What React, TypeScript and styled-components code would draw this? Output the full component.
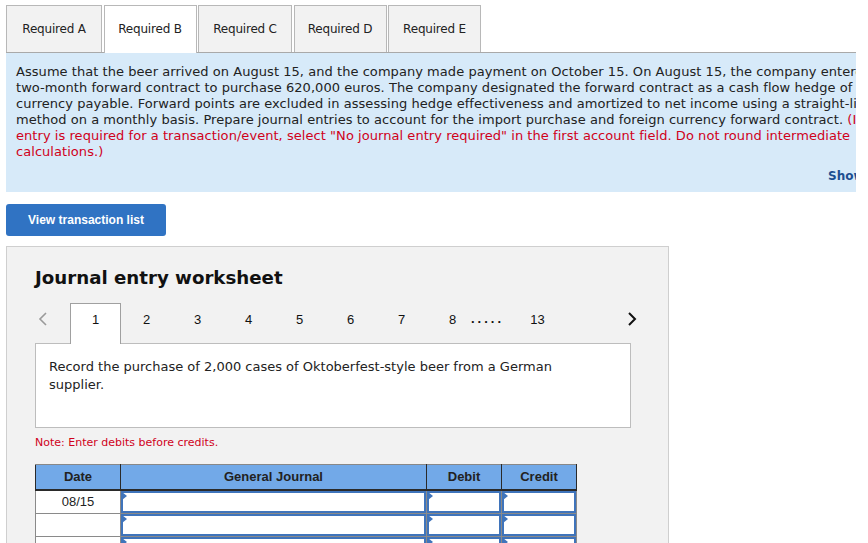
import styled, { createGlobalStyle } from "styled-components";

const GlobalStyle = createGlobalStyle`
  html, body {
    margin: 0;
    padding: 0;
    background: #fff;
    overflow: hidden;
  }
  body {
    font-family: "DejaVu Sans", Verdana, sans-serif;
    color: #222;
  }
  * {
    box-sizing: border-box;
  }
`;

const tabs = [
  { label: "Required A", width: 96 },
  { label: "Required B", width: 93 },
  { label: "Required C", width: 94 },
  { label: "Required D", width: 93 },
  { label: "Required E", width: 93 },
];
const pages = ["1", "2", "3", "4", "5", "6", "7", "8"];

const Page = styled.div`
  width: 868px;
  height: 543px;
  padding: 5px 0 0 6px;
`;

const TabBar = styled.div`
  display: flex;
  gap: 1.5px;
  width: 850px;
  border-bottom: 1px solid #a9a9a9;
`;

const Tab = styled.div<{ $active?: boolean; $w: number }>`
  width: ${(p) => p.$w}px;
  height: ${(p) => (p.$active ? "48px" : "47px")};
  margin-bottom: ${(p) => (p.$active ? "-1px" : "0")};
  padding-bottom: ${(p) => (p.$active ? "1px" : "0")};
  display: flex;
  align-items: center;
  justify-content: center;
  font-size: 12px;
  letter-spacing: -0.2px;
  white-space: nowrap;
  color: #222;
  background: ${(p) => (p.$active ? "#fff" : "#f2f2f2")};
  border: 1px solid #b8b8b8;
  border-bottom: none;
`;

const InfoBox = styled.div`
  width: 850px;
  height: 139px;
  background: #d7eaf9;
  overflow: hidden;
  padding: 11px 0 0 10px;
  font-size: 13px;
  line-height: 16px;
  letter-spacing: 0.05px;
  white-space: nowrap;
`;

const Red = styled.span`
  color: #d0011b;
`;

const ShowRow = styled.div`
  margin-top: 8px;
  padding-left: 812px;
  font-size: 12px;
  font-weight: bold;
  letter-spacing: 0;
  color: #1d4f91;
`;

const ViewButton = styled.button`
  display: block;
  margin-top: 12px;
  width: 160px;
  height: 32px;
  background: #3073c3;
  color: #fff;
  border: none;
  border-radius: 3px;
  font-family: "Liberation Sans", Arial, sans-serif;
  font-weight: bold;
  font-size: 12px;
  padding: 0;
`;

const Panel = styled.div`
  margin-top: 10px;
  width: 663px;
  height: 320px;
  background: #f2f2f2;
  border: 1px solid #cfcfcf;
  padding: 19px 0 0 28px;
`;

const Title = styled.h1`
  margin: 0;
  font-size: 18.2px;
  line-height: 24px;
  font-weight: bold;
  color: #111;
`;

const Pager = styled.div`
  margin-top: 13px;
  display: flex;
  align-items: flex-start;
  width: 605px;
  height: 40px;
  font-family: "Liberation Sans", Arial, sans-serif;
  font-size: 13px;
`;

const Arrow = styled.div<{ $next?: boolean }>`
  width: 16px;
  height: 32px;
  display: flex;
  align-items: center;
  justify-content: center;
  margin-right: ${(p) => (p.$next ? "0" : "19px")};
  margin-left: ${(p) => (p.$next ? "auto" : "0")};
`;

const PageTab = styled.div<{ $active?: boolean }>`
  width: 51px;
  height: 41px;
  padding-top: 8px;
  line-height: 16px;
  text-align: center;
  color: #111;
  background: ${(p) => (p.$active ? "#fff" : "transparent")};
  border: 1px solid ${(p) => (p.$active ? "#a0a0a0" : "transparent")};
  border-bottom: none;
  position: relative;
  z-index: 1;
`;

const Dots = styled.div`
  width: 41px;
  margin-left: -7px;
  padding-top: 8px;
  line-height: 16px;
  font-weight: bold;
  letter-spacing: 3px;
  white-space: nowrap;
  color: #111;
`;

const PromptBox = styled.div`
  width: 596px;
  height: 85px;
  background: #fff;
  border: 1px solid #bdbdbd;
  padding: 14px 60px 0 13px;
  font-size: 13px;
  line-height: 18px;
  color: #222;
`;

const Note = styled.div`
  margin-top: 8px;
  font-size: 11px;
  line-height: 14px;
  color: #d0011b;
`;

const Table = styled.table`
  margin-top: 14px;
  border-collapse: collapse;
  table-layout: fixed;
  width: 541px;
  font-family: "Liberation Sans", Arial, sans-serif;
  font-size: 13px;
  border: 1px solid #888;
`;

const Th = styled.th<{ $w: number }>`
  width: ${(p) => p.$w}px;
  height: 25px;
  padding: 0;
  background: #72a9e8;
  color: #222;
  font-weight: bold;
  border-left: 1px solid #2a2a2a;
  border-right: 1px solid #2a2a2a;
  border-bottom: 2px solid #2a2a2a;
  border-top: 1px solid #888;
`;

const Td = styled.td`
  height: 23px;
  padding: 0;
  background: #fff;
  border: 1px solid #8a8a8a;
  text-align: center;
  color: #222;
  vertical-align: middle;
`;

const InputBox = styled.div`
  position: relative;
  height: 22px;
  border: 2px solid #3f74bb;
  background: #fff;

  &::before {
    content: "";
    position: absolute;
    top: -1px;
    left: -1px;
    border-left: 5px solid #3f74bb;
    border-top: 4px solid transparent;
    border-bottom: 4px solid transparent;
  }
`;

const rows = ["08/15", "", ""];

export default function App() {
  return (
    <>
      <GlobalStyle />
      <Page>
        <TabBar>
          {tabs.map((t, i) => (
            <Tab key={t.label} $w={t.width} $active={i === 1}>
              {t.label}
            </Tab>
          ))}
        </TabBar>

        <InfoBox>
          Assume that the beer arrived on August 15, and the company made payment on October 15. On August 15, the company entered into a
          <br />
          two-month forward contract to purchase 620,000 euros. The company designated the forward contract as a cash flow hedge of the foreign
          <br />
          currency payable. Forward points are excluded in assessing hedge effectiveness and amortized to net income using a straight-line
          <br />
          method on a monthly basis. Prepare journal entries to account for the import purchase and foreign currency forward contract.{" "}
          <Red>(If no journal</Red>
          <br />
          <Red>
            entry is required for a transaction/event, select "No journal entry required" in the first account field. Do not round intermediate
          </Red>
          <br />
          <Red>calculations.)</Red>
          <ShowRow>Show less</ShowRow>
        </InfoBox>

        <ViewButton>View transaction list</ViewButton>

        <Panel>
          <Title>Journal entry worksheet</Title>

          <Pager>
            <Arrow>
              <svg width="10" height="16" viewBox="0 0 10 16">
                <polyline points="8,2 2,8 8,14" fill="none" stroke="#9a9a9a" strokeWidth="1.6" />
              </svg>
            </Arrow>
            {pages.map((n) => (
              <PageTab key={n} $active={n === "1"}>
                {n}
              </PageTab>
            ))}
            <Dots>.....</Dots>
            <PageTab>13</PageTab>
            <Arrow $next>
              <svg width="10" height="16" viewBox="0 0 10 16">
                <polyline points="2,2 8,8 2,14" fill="none" stroke="#111" strokeWidth="2" />
              </svg>
            </Arrow>
          </Pager>

          <PromptBox>
            Record the purchase of 2,000 cases of Oktoberfest-style beer from a German supplier.
          </PromptBox>

          <Note>Note: Enter debits before credits.</Note>

          <Table>
            <thead>
              <tr>
                <Th $w={85}>Date</Th>
                <Th $w={306}>General Journal</Th>
                <Th $w={75}>Debit</Th>
                <Th $w={75}>Credit</Th>
              </tr>
            </thead>
            <tbody>
              {rows.map((d, i) => (
                <tr key={i}>
                  <Td>{d}</Td>
                  <Td>
                    <InputBox />
                  </Td>
                  <Td>
                    <InputBox />
                  </Td>
                  <Td>
                    <InputBox />
                  </Td>
                </tr>
              ))}
            </tbody>
          </Table>
        </Panel>
      </Page>
    </>
  );
}
